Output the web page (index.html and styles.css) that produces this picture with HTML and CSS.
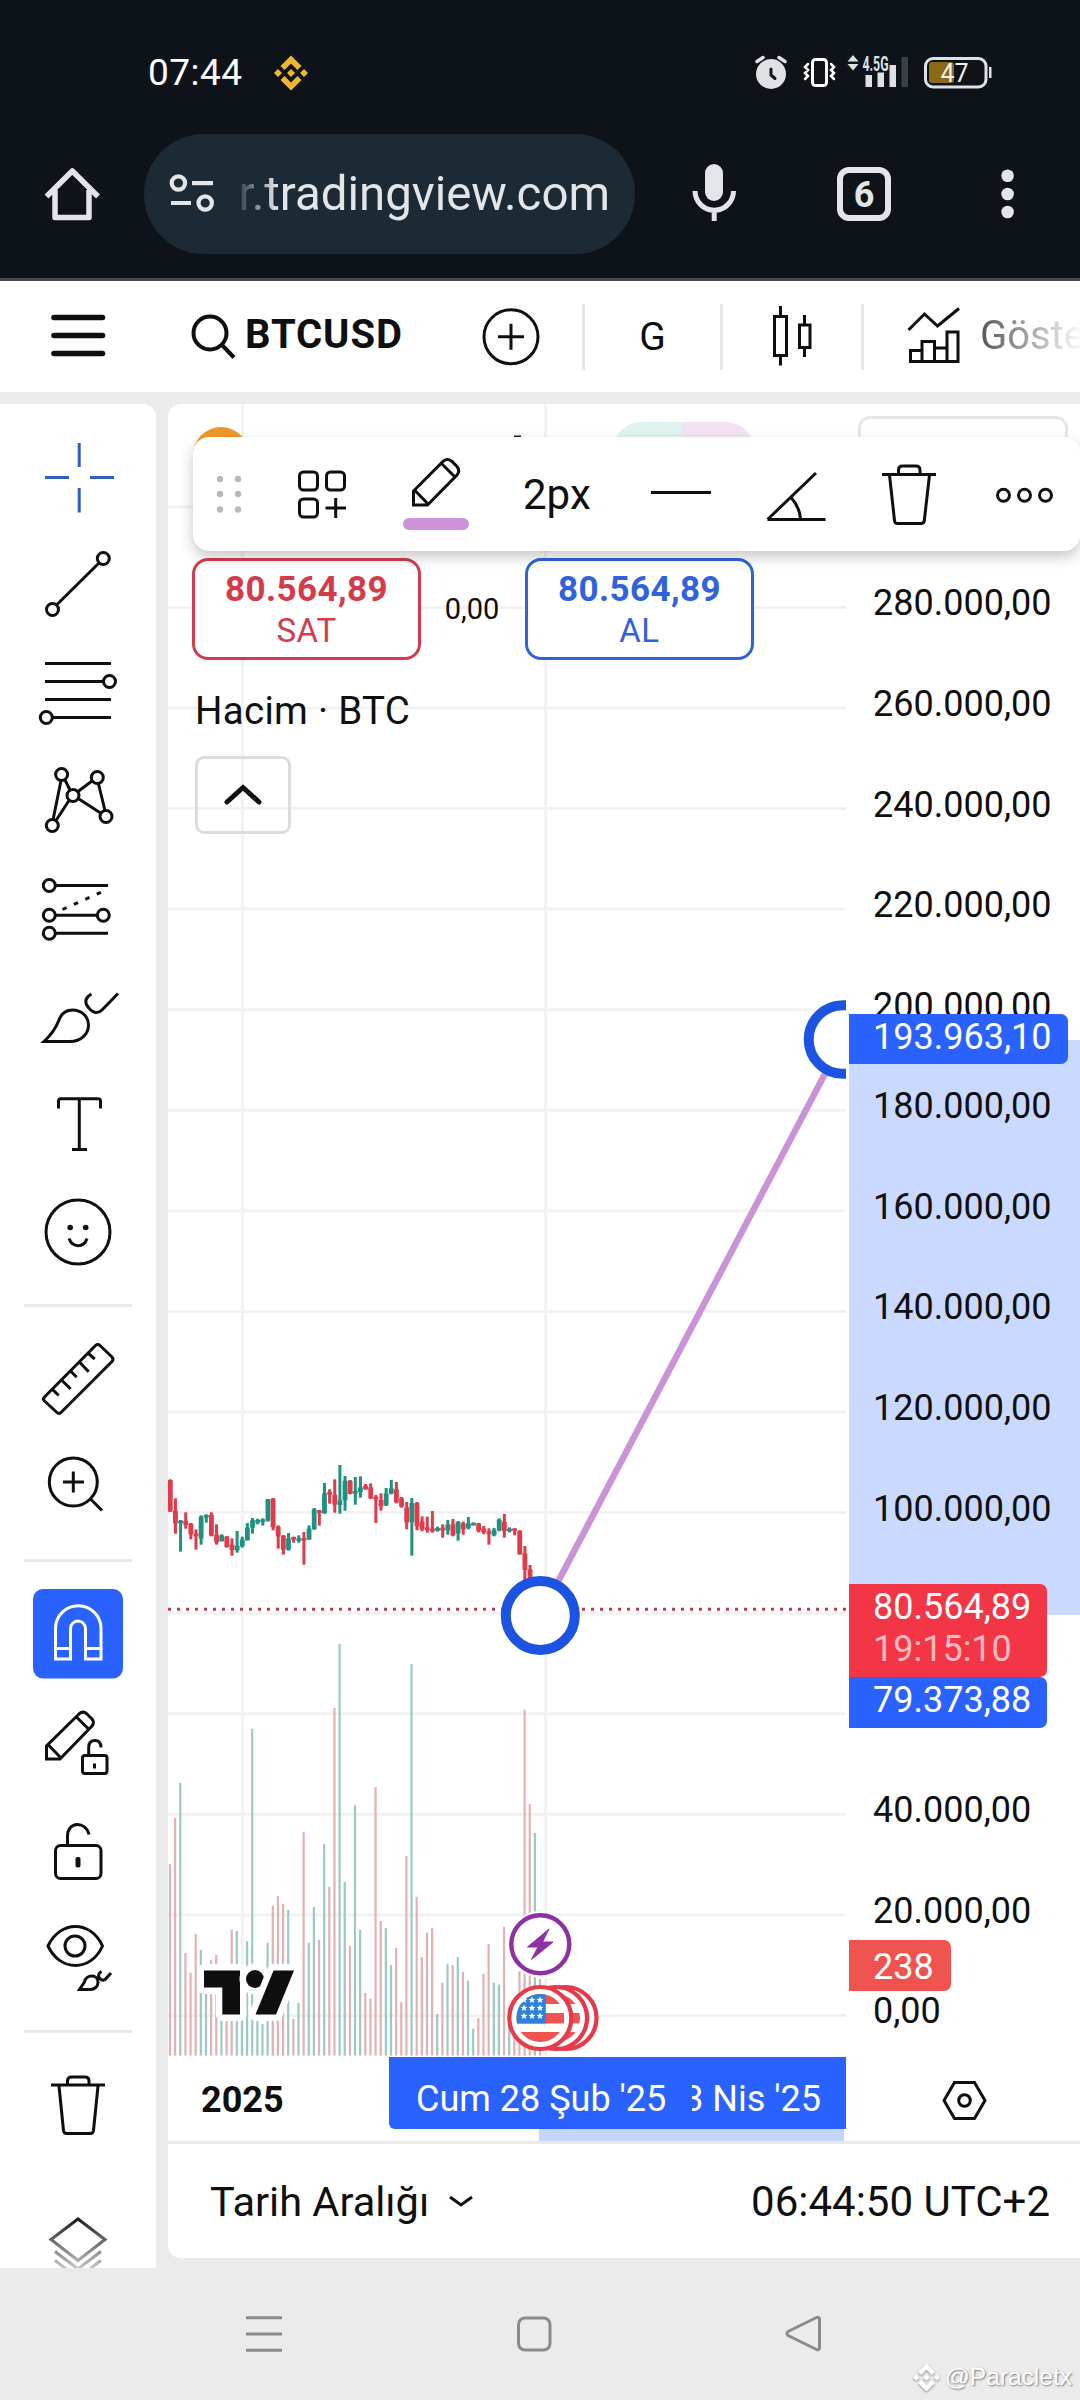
FILE: index.html
```html
<!DOCTYPE html>
<html lang="tr">
<head>
<meta charset="utf-8">
<title>BTCUSD</title>
<link rel="stylesheet" href="styles.css">
</head>
<body>
<header class="status">
  <span class="clock">07:44</span>
  <svg class="bnb" viewBox="-18 -18 36 36"><g fill="#f0b92b"><path d="M0-17.500L10.500-7L6.500-3L0-9.500L-6.500-3L-10.500-7zM0 17.500L10.500 7L6.500 3L0 9.500L-6.500 3L-10.500 7zM0-4L4 0L0 4L-4 0zM13-4L17 0L13 4L9 0zM-13-4L-9 0L-13 4L-17 0z"/></g></svg>
  <svg class="sysicons" viewBox="745 45 260 60">
    <g stroke="#dfe2e5" fill="none" stroke-width="3.500" stroke-linecap="round">
      <circle cx="771" cy="74" r="15" fill="#dfe2e5" stroke="none"/>
      <path d="M757 61.500L763 57.500M785 61.500L779 57.500"/>
      <path d="M771 69V75L775 78.500" stroke="#0e131a" stroke-width="3"/>
      <rect x="812.500" y="59.500" width="14" height="26" rx="3" stroke="#fff" stroke-width="3"/>
      <path d="M808 64l-3 3 3 3-3 3 3 3-3 3M831 64l3 3-3 3 3 3-3 3 3 3" stroke="#fff" stroke-width="2.500"/>
    </g>
    <g fill="#dfe2e5">
      <path d="M853 55L858.500 61.500H847.500zM853 70.500L858.500 64H847.500z"/>
      <rect x="865.500" y="75" width="6.500" height="12"/><rect x="877.500" y="72.500" width="6.500" height="14.500"/><rect x="889.500" y="65" width="6.500" height="22"/>
      <rect x="901.500" y="57" width="6.500" height="30" fill="#3a3f45"/>
      <text x="862.500" y="70.500" class="net" textLength="26" lengthAdjust="spacingAndGlyphs">4.5G</text>
      <rect x="929" y="62" width="25" height="21" rx="3" fill="#8a6a16"/>
      <rect x="989" y="67" width="2.500" height="11"/>
    </g>
    <rect x="925.500" y="58.500" width="60.500" height="28.500" rx="7.500" fill="none" stroke="#dfe2e5" stroke-width="3"/>
    <text x="940.500" y="81.500" class="batt">47</text>
  </svg>
</header>
<div class="browser">
  <svg class="home" viewBox="0 160 144 68"><path d="M46.500 196.500L72.300 171L98 196.500M55 190V217.500H89V190" fill="none" stroke="#e3e6e9" stroke-width="5.500" stroke-linejoin="round"/></svg>
  <div class="url">
    <svg viewBox="168 170 50 50"><g fill="none" stroke="#e3e6e9" stroke-width="4.200"><circle cx="178.400" cy="184" r="6.700"/><path d="M192 184.200H213M171 204H191"/><circle cx="205.200" cy="204" r="6.700"/></g></svg>
    <span>r.tradingview.com</span>
  </div>
  <svg class="actions" viewBox="635 160 445 68"><g fill="none" stroke="#e3e6e9" stroke-width="5">
    <rect x="705" y="164" width="18" height="37" rx="9" fill="#e3e6e9" stroke="none"/>
    <path d="M695 191A19 19 0 0 0 733.500 191M714.200 209V221"/>
    <rect x="840" y="170" width="48" height="48" rx="9" stroke-width="6"/></g>
    <text x="864" y="206.500" class="tabs">6</text>
    <g fill="#e3e6e9"><circle cx="1007.600" cy="175.700" r="6.300"/><circle cx="1007.600" cy="194" r="6.300"/><circle cx="1007.600" cy="212" r="6.300"/></g>
  </svg>
</div>
<nav class="topbar">
  <svg class="menu ic" viewBox="0 286.500 156 100"><path d="M54 317H102.500M54 335H102.500M54 353H102.500" stroke-width="5.600" stroke-linecap="round"/></svg>
  <div class="search"><svg class="ic" viewBox="188 309 48 54"><g stroke-width="4"><circle cx="210" cy="332" r="16.500"/><path d="M222 344L234 356.500"/></g></svg><b>BTCUSD</b></div>
  <svg class="plus ic" viewBox="466 286.500 116 100"><circle cx="511" cy="336.300" r="27"/><path d="M498 336.300H524M511 323.300V349.300"/></svg>
  <div class="cell interval">G</div>
  <div class="cell"><svg class="ic w100" viewBox="724 303 138 66"><rect x="775.500" y="315.500" width="12" height="39"/><rect x="800.500" y="324" width="10.500" height="22.500"/><path d="M781.500 305V315M781.500 355V364.500M805.500 314V324M805.500 347V356"/></svg></div>
  <div class="cell ind"><svg class="ic" viewBox="904.500 303 60 66"><path d="M909 329L925 313L938 325L959.500 307.500M911 361V349.500H922.500V361M922.500 349.500V340.500H935V361M935 347H947.500V361M947.500 347V331H958.500V361M909.500 360.500H960"/></svg><span>Göstergeler</span></div>
</nav>
<main class="work">
  <aside class="tools">
    <svg class="ic" viewBox="0 404 156 126"><path stroke="#2f5fc4" d="M79.200 443V467M79.200 488V512.500M45 477.500H69M90 477.500H114"/></svg>
    <svg class="ic" viewBox="0 530 156 110"><path d="M56.500 605L99 563"/><circle cx="103.300" cy="558.500" r="6"/><circle cx="52.500" cy="609.500" r="6"/></svg>
    <svg class="ic" viewBox="0 640 156 110"><path d="M45 663.500H111M45 681.500H103M45 699.500H111M53 717.500H111"/><circle cx="109.500" cy="681.500" r="6"/><circle cx="46.300" cy="717.500" r="6"/></svg>
    <svg class="ic" viewBox="0 750 156 105"><path d="M60.900 781L53.200 819M65 780L70 790M69 800.500L56 820.500M78 791.500L92 781M98.500 784L105 810.500M79 799L100.500 813"/><circle cx="61.600" cy="774.500" r="6"/><circle cx="97.300" cy="777.500" r="6"/><circle cx="73" cy="795.500" r="6"/><circle cx="106" cy="816.500" r="6"/><circle cx="52.300" cy="825.500" r="6"/></svg>
    <svg class="ic" viewBox="0 855 156 110"><path d="M56 885.500H108M56 915.300H97M56 933.300H108"/><path d="M62.500 909.500L104 891" stroke-dasharray="4.500 8"/><circle cx="49.300" cy="885.500" r="6"/><circle cx="49.300" cy="915.300" r="6"/><circle cx="103.300" cy="915.300" r="6"/><circle cx="49.300" cy="933.300" r="6"/></svg>
    <svg class="ic" viewBox="0 965 156 105"><path d="M44 1041.500H70C81 1041.500 88.500 1034 88.500 1025C88.500 1016 81 1010 72.500 1010C66 1010 61.500 1013 59 1020C56 1028 50 1036 44 1041.500z"/><path d="M91.500 994C85.500 997 84 1002 88 1007C93 1013.500 98 1014 102 1010L118 993.500"/></svg>
    <svg class="ic" viewBox="0 1070 156 110"><path d="M58.500 1108.500V1101Q58.500 1098.700 61 1098.700H98Q100.500 1098.700 100.500 1101V1108.500M79.300 1099V1149.500M72 1149.500H87"/></svg>
    <svg class="ic" viewBox="0 1180 156 124"><circle cx="78" cy="1232" r="32"/><circle cx="70.200" cy="1227.500" r="2.800" class="dot"/><circle cx="85.700" cy="1227.500" r="2.800" class="dot"/><path d="M69 1238.500C72.500 1248 84 1248 87 1238.500"/></svg>
    <hr>
    <svg class="ic" viewBox="0 1307 156 123"><path d="M44.500 1397L95.500 1345.500Q97.700 1343.500 100 1345.500L112 1357Q114 1359.300 112 1361.500L61 1412.500Q59 1414.500 57 1412.500L44.500 1401Q42.500 1399 44.500 1397zM51.700 1388.700L58.700 1395.500M61 1379.500L70.700 1389M70 1370.500L76.700 1377.300M79.300 1362L88.700 1371.700M87.700 1352.900L94.700 1359"/></svg>
    <svg class="ic" viewBox="0 1430 156 129"><circle cx="73.300" cy="1482" r="24"/><path d="M63 1482H84M73.300 1471.500V1492.500M90.500 1499L102 1510.500"/></svg>
    <hr>
    <svg class="ic" viewBox="0 1562 156 130"><rect x="33" y="1589" width="90" height="89.500" rx="10" class="active"/><path stroke="#fff" d="M55.500 1659V1628.500A22.700 22.700 0 0 1 101 1628.500V1659H85.500V1628.500A7.500 7.500 0 0 0 70.500 1628.500V1659zM55.500 1648.500H70.500M85.500 1648.500H101"/></svg>
    <svg class="ic" viewBox="0 1692 156 108"><path d="M46.500 1759V1746L79.500 1713.500Q83 1710.500 87 1714L92 1719Q95 1722.500 92 1726L60 1759zM48.500 1745L60.500 1757.500M76.500 1717L88.500 1729"/><rect x="82.500" y="1755.500" width="24.500" height="18" rx="2.500"/><path d="M88.700 1755V1747.500Q88.700 1740.500 95 1740.500Q101 1740.500 101 1747.500"/><rect class="dot" x="93" y="1763.500" width="3" height="5"/></svg>
    <svg class="ic" viewBox="0 1800 156 106"><rect x="55.500" y="1845.500" width="45.500" height="33" rx="5"/><path d="M67.500 1845V1836C67.500 1821 86 1821 89 1834.500"/><rect class="dot" x="75.500" y="1857" width="5" height="10.500" rx="2"/></svg>
    <svg class="ic" viewBox="0 1906 156 124"><path d="M48 1946C60 1920 91 1920 102.500 1946C91 1972 60 1972 48 1946z"/><circle cx="75" cy="1946" r="10"/><path d="M79.500 1989.500H90C95 1989.500 98 1986 98 1982.500C98 1974 86 1974 84.500 1982zM101.500 1971.500C97 1974 98.500 1978 101 1979.500C103 1981 105 1980 106.500 1978L111 1973"/></svg>
    <hr>
    <svg class="ic" viewBox="0 2033 156 137"><path d="M51 2085H105M67.500 2084V2081Q67.500 2077 71.500 2077H85Q89 2077 89 2081V2084M59 2086L63.500 2130.500Q64 2133.500 66.500 2133.500H90.500Q93 2133.500 93.500 2130.500L98 2086"/></svg>
    <svg class="ic" viewBox="0 2170 156 98"><defs><linearGradient id="fade" x1="0" y1="2215" x2="0" y2="2270" gradientUnits="userSpaceOnUse"><stop offset="0" stop-color="#111"/><stop offset="1" stop-color="#ccc"/></linearGradient></defs><path stroke="url(#fade)" d="M78 2219L105 2239.500L78 2260.500L51 2239.500zM55 2251.500L78 2269L101 2251.500M55 2260.500L78 2278L101 2260.500"/></svg>
  </aside>
  <section class="panel">
    <div class="chartrow">
      <div class="plot">
        <svg id="chart" viewBox="168 404 678 1652">
          <g class="grid" id="grid"></g>
          <g id="volume"></g>
          <g id="candles"></g>
          <path d="M168 1609.300H846" class="last"/>
          <path d="M540.300 1615.500L843 1039.500" class="trend"/>
          <circle cx="540.300" cy="1615.500" r="34.500" class="handle"/><circle cx="843" cy="1039.500" r="34.300" class="handle"/>
          <g class="tv"><path d="M204 1970.500H240V2014.500H222.300V1987.500H204z"/><circle cx="255" cy="1979" r="9"/><path d="M273.500 1970.500H294L276 2014.500H255.500z"/></g>
          <circle cx="540.300" cy="1944.300" r="33.500" fill="#fff"/>
          <circle cx="540.300" cy="1944.300" r="29" class="bolt"/><path d="M549 1929L527.500 1947H538L531.500 1959.500L553 1942H542.500z" fill="#8e2fa3" stroke="#8e2fa3" stroke-width="1" stroke-linejoin="round"/>
          <defs>
            <clipPath id="disc"><circle r="24"/></clipPath>
            <g id="flag"><circle r="31" fill="#fff" stroke="#e8394a" stroke-width="4.200"/><g clip-path="url(#disc)"><path fill="#ef5350" d="M-24-24H24V-14H-24zM-24-5H24V5.500H-24zM-24 14H24V24H-24z"/><path fill="#2f80d8" d="M-24-24H5.500V5.500H-24z"/></g></g>
          </defs>
          <use href="#flag" x="565.500" y="2018"/><use href="#flag" x="556" y="2018"/><use href="#flag" x="540.300" y="2018"/>
          <g id="stars" fill="#fff"></g>
          <circle cx="221" cy="455" r="28" fill="#ee972b"/>
          <rect x="514" y="435.500" width="7" height="8" fill="#222"/>
          <path d="M682 422H641A28 28 0 0 0 641 478H682z" fill="#dff2f0"/><path d="M682 422H726A28 28 0 0 1 726 478H682z" fill="#f3e2f4"/>
        </svg>
        <div class="legend">
          <div class="quotes">
            <div class="quote sell"><b>80.564,89</b><span>SAT</span></div>
            <span class="spread">0,00</span>
            <div class="quote buy"><b>80.564,89</b><span>AL</span></div>
          </div>
          <p class="vol">Hacim · BTC</p>
          <div class="collapse"><svg class="ic" viewBox="220 780 46 30"><path stroke-width="5" stroke-linecap="round" d="M227 802L243 787.500L259 802"/></svg></div>
        </div>
      </div>
      <div class="axis">
        <div class="band"></div>
        <div class="unit"></div>
        <ol>
          <li>280.000,00</li><li>260.000,00</li><li>240.000,00</li><li>220.000,00</li><li>200.000,00</li><li>180.000,00</li><li>160.000,00</li><li>140.000,00</li><li>120.000,00</li><li>100.000,00</li><li></li><li></li><li>40.000,00</li><li>20.000,00</li><li>0,00</li>
        </ol>
        <div class="tag target">193.963,10</div>
        <div class="tag price">80.564,89<span>19:15:10</span></div>
        <div class="tag origin">79.373,88</div>
        <div class="tag volume">238</div>
      </div>
    </div>
    <div class="timerow">
      <b>2025</b>
      <div class="range"></div>
      <div class="dates"><span>Cum 28 Şub '25</span><span class="end">3 Nis '25</span></div>
      <svg class="ic" viewBox="940 2078 48 44"><path d="M954.500 2082.500H974.500L985 2100.500L974.500 2118.500H954.500L944 2100.500z"/><circle cx="964.500" cy="2100.500" r="5.800"/></svg>
    </div>
    <div class="footer">
      <span class="rng">Tarih Aralığı</span><svg class="ic" viewBox="448 2190 28 20"><path d="M451 2196L462 2204L473 2196"/></svg>
      <span class="utc">06:44:50 UTC+2</span>
    </div>
  </section>
  <div class="floatbar">
    <svg class="ic" viewBox="193 437 320 114">
      <g class="grip"><circle cx="220" cy="479" r="3.200"/><circle cx="238" cy="479" r="3.200"/><circle cx="220" cy="494" r="3.200"/><circle cx="238" cy="494" r="3.200"/><circle cx="220" cy="509.500" r="3.200"/><circle cx="238" cy="509.500" r="3.200"/></g>
      <rect x="299.500" y="472" width="18" height="18" rx="4"/><rect x="326.500" y="472" width="18" height="18" rx="4"/><rect x="299.500" y="499" width="18" height="18" rx="4"/><path d="M325.500 508H346M335.700 498V518"/>
      <path d="M413.500 505V491L443.500 461Q447.500 458 451.500 461L457 466.500Q460.500 471 457 475L427.500 505zM415 490.500L428 504M441.500 463.500L455 477"/>
      <rect x="403" y="518" width="66" height="12" rx="6" fill="#cd93d8" stroke="none"/>
    </svg>
    <span>2px</span>
    <svg class="ic" viewBox="600 437 480 114">
      <path d="M651 492.500H711M767.500 519.500L816 473M767.500 519.500H825.500M791.500 498Q800 508 800.500 519M882 474.500H936M898.500 474V470Q898.500 466 902.500 466H916Q920 466 920 470V474M889.500 475L894.500 520.500Q894.700 523.500 897.500 523.500H921Q924 523.500 924.300 520.500L929.500 475"/>
      <circle cx="1003.500" cy="495.300" r="6"/><circle cx="1024.500" cy="495.300" r="6"/><circle cx="1045.500" cy="495.300" r="6"/>
    </svg>
  </div>
</main>
<footer class="sysnav">
  <svg viewBox="0 2268 1080 132"><g fill="none" stroke="#8b8b8b" stroke-width="3" stroke-linejoin="round"><path d="M246 2317.700H282M246 2334H282M246 2350.300H282"/><rect x="518.500" y="2318" width="31.500" height="32" rx="6.500"/><path d="M788 2331.500L816.500 2317.500Q819.500 2316.500 819.500 2319.500V2347.500Q819.500 2350.500 816.500 2349.500L788 2335.500Q786 2333.500 788 2331.500z"/></g></svg>
  <div class="mark"><svg viewBox="-18 -18 36 36"><path fill="#fff" d="M0-17.500L10.500-7L6.500-3L0-9.500L-6.500-3L-10.500-7zM0 17.500L10.500 7L6.500 3L0 9.500L-6.500 3L-10.500 7zM0-4L4 0L0 4L-4 0zM13-4L17 0L13 4L9 0zM-13-4L-9 0L-13 4L-17 0z"/></svg>@Paracletx</div>
</footer>
<script src="chart.js"></script>
</body>
</html>
```
FILE: styles.css
```css
* { box-sizing: border-box; }
body { margin: 0; width: 1080px; height: 2400px; overflow: hidden; background: #ebebeb; color: #0f0f0f; font-family: Roboto, "Liberation Sans", sans-serif; font-size: 36px; }
svg { display: block; flex: none; }
.ic { fill: none; stroke: #0f0f0f; stroke-width: 3; }
.dot { fill: #0f0f0f; stroke: none; }

.status { height: 118px; padding-left: 148px; background: #0e131a; display: flex; }
.clock { color: #fff; font-size: 37px; line-height: 42px; margin-top: 52px; width: 125px; letter-spacing: .5px; }
.bnb { width: 36px; height: 36px; margin-top: 55px; }
.sysicons { width: 260px; height: 60px; margin: 45px 0 0 436px; }
.net { font: 700 21px Roboto, sans-serif; }
.batt { font: 25px Roboto, sans-serif; fill: #f3f0ea; }

.browser { height: 163px; background: #0e131a; border-bottom: 3px solid #46494d; display: flex; align-items: center; padding-bottom: 8px; }
.home { width: 144px; height: 68px; }
.url { width: 491px; height: 120px; border-radius: 60px; background: #1b2a34; display: flex; align-items: center; padding: 0 0 0 24px; color: #e3e6e9; font-size: 47.4px; }
.url svg { width: 50px; height: 50px; }
.url span { width: 395px; flex: none; margin-left: -3px; text-align: right; white-space: nowrap; -webkit-mask-image: linear-gradient(90deg, transparent 18px, #000 62px); mask-image: linear-gradient(90deg, transparent 18px, #000 62px); }
.actions { width: 445px; height: 68px; }
.tabs { font: 700 36px Roboto, sans-serif; fill: #e3e6e9; text-anchor: middle; }

.topbar { height: 111px; background: #fff; display: grid; grid-template-columns: 156px 310px 116px 138px 141px 219px; align-items: center; }
.menu, .plus { width: 100%; height: 100px; }
.search { display: flex; align-items: center; padding-left: 32px; }
.search svg { width: 48px; height: 54px; }
.search b { font-size: 40px; font-weight: 700; letter-spacing: .9px; margin: 0 0 5px 9px; }
.cell { height: 66px; border-left: 3px solid #e6e6e6; overflow: hidden; display: flex; align-items: center; }
.w100 { width: 138px; height: 66px; }
.interval { justify-content: center; font-size: 39px; }
.ind { padding-left: 40px; }
.ind svg { width: 60px; height: 66px; }
.ind span { font-size: 40px; margin: 0 0 3px 16px; color: transparent; background: linear-gradient(90deg, #555, #fff 104px); -webkit-background-clip: text; background-clip: text; }

.work { height: 1876px; border-top: 12px solid #ebebeb; display: flex; gap: 12px; position: relative; }
.tools { width: 156px; height: 1864px; background: #fff; border-radius: 0 13px 0 0; overflow: hidden; }
.tools svg { width: 156px; }
.tools circle { fill: #fff; }
.tools .dot { fill: #0f0f0f; }
.tools .active { fill: #2962ff; stroke: none; }
.tools hr { width: 108px; height: 3px; margin: 0 24px; border: 0; background: #e9e9e9; }

.panel { width: 912px; height: 1854px; background: #fff; border-radius: 13px 0 0 13px; overflow: hidden; }
.chartrow { height: 1652px; display: flex; }
.plot { width: 678px; position: relative; }
#chart { width: 678px; height: 1652px; }
.grid { stroke: #f2f2f2; stroke-width: 3; }
.last { stroke: #c23d4b; stroke-width: 3; stroke-dasharray: 3 6; }
.trend { stroke: #ca93d8; stroke-width: 6.5; }
.handle { fill: #fff; stroke: #1d53e2; stroke-width: 10; }
.tv { fill: #0f0f0f; stroke: #fff; stroke-width: 13; paint-order: stroke; stroke-linejoin: round; }
.bolt { fill: #fff; stroke: #8e2fa3; stroke-width: 4.4; }
.legend { position: absolute; left: 24px; top: 154px; }
.quotes { display: flex; align-items: center; }
.quote { width: 229px; height: 102px; border: 3px solid; border-radius: 16px; background: #fff; display: flex; flex-direction: column; align-items: center; padding-top: 8px; }
.quote b { font-size: 35px; line-height: 42px; letter-spacing: .4px; }
.quote span { font-size: 33px; line-height: 40px; letter-spacing: .5px; }
.sell { color: #d63a4a; }
.buy { color: #2f62dc; }
.spread { width: 104px; padding-right: 2px; text-align: center; font-size: 29px; }
.vol { margin: 28px 0 0 3px; font-size: 38.5px; line-height: 46px; letter-spacing: .3px; }
.collapse { margin: 22px 0 0 3px; width: 96px; height: 78px; border: 3px solid #dcdcdc; border-radius: 9px; display: grid; place-items: center; }
.collapse svg { width: 46px; height: 30px; }

.axis { width: 234px; position: relative; }
.axis ol { list-style: none; margin: 0; padding: 149.400px 0 0 27px; position: relative; }
.axis li { height: 100.580px; line-height: 100.580px; }
.band { position: absolute; left: 3px; right: 0; top: 636px; height: 575px; background: #c9d9ff; }
.unit { position: absolute; left: 12px; top: 12px; width: 210px; height: 60px; border: 3px solid #e6e6e6; border-radius: 12px; }
.tag { position: absolute; left: 3px; padding-left: 24px; color: #fff; border-radius: 0 7px 7px 0; background: #2962ff; }
.target { top: 610px; width: 219px; height: 50px; line-height: 46px; }
.price { top: 1180px; width: 198px; height: 93px; line-height: 46px; background: #f23645; }
.price span { display: block; line-height: 38px; color: #ffb9c0; }
.origin { top: 1273px; width: 198px; height: 51px; line-height: 46px; }
.volume { top: 1536px; width: 102px; height: 51px; line-height: 54px; background: #ef5350; }

.timerow { height: 88px; border-bottom: 3px solid #e9e9e9; position: relative; display: flex; align-items: center; justify-content: space-between; padding: 0 92px 0 33px; }
.timerow b { margin-top: 3px; }
.timerow svg { width: 48px; height: 44px; margin-top: 3px; }
.range { position: absolute; left: 371px; top: 72px; width: 305px; height: 13px; background: #c5d5fc; }
.dates { position: absolute; left: 221px; top: 1px; width: 457px; height: 72px; padding: 0 25px 0 27px; background: #2962ff; border-radius: 0 0 0 6px; color: #fff; line-height: 84px; display: flex; justify-content: space-between; white-space: nowrap; }
.end { width: 129px; overflow: hidden; display: flex; justify-content: flex-end; }
.footer { height: 114px; display: flex; align-items: center; padding: 0 30px 0 42px; font-size: 41.5px; }
.footer svg { width: 28px; height: 20px; margin-left: 18px; }
.utc { margin-left: auto; font-size: 42px; }

.floatbar { position: absolute; left: 193px; top: 33px; width: 887px; height: 114px; background: #fff; border-radius: 16px; box-shadow: 0 6px 14px rgba(0,0,0,.22); display: flex; align-items: center; }
.floatbar svg { height: 114px; }
.floatbar .grip { fill: #b8b8b8; stroke: none; }
.floatbar svg:first-child { width: 320px; }
.floatbar svg:last-child { width: 480px; }
.floatbar span { width: 87px; padding-left: 10px; font-size: 42px; }

.sysnav { height: 132px; position: relative; }
.sysnav > svg { width: 1080px; height: 132px; }
.mark { position: absolute; right: 8px; bottom: 8px; display: flex; align-items: center; color: #fff; font: 24.5px/30px "Liberation Sans", sans-serif; text-shadow: 1px 1px 2px #777; }
.mark svg { width: 29px; height: 29px; margin-right: 4px; filter: drop-shadow(0 1px 1px #888); }
```
FILE: chart.js
```js
const NS = "http://www.w3.org/2000/svg";
function add(parent, name, attrs) {
  const el = document.createElementNS(NS, name);
  for (const k in attrs) el.setAttribute(k, attrs[k]);
  document.getElementById(parent).appendChild(el);
}
const barX = i => 170 + 5.139 * i;

// grid: one line per 20.000, plus the two month lines
for (let k = 0; k <= 15; k++) add("grid", "path", { d: `M168 ${2015.5 - 100.58 * k}H846` });
for (const x of [242.3, 545.7]) add("grid", "path", { d: `M${x} 404V2056` });

// volume per day, r = down day, g = up day
const volume = "455r 565r 648g 244r 197r 289r 251g 165g 227r 239r 85g 85r 299r 296g 135g 272g 776g 85g 75g 268g 356r 379r 360r 346g 87r 125g 531r 268g 353g 275r 503g 401r 826r 978g 413g 261r 595g 299g 149r 135r 638r 320r 303g 215g 256r 127r 474r 930g 377r 234r 292r 303r 99g 173r 218g 215r 234g 199r 178g 64g 89r 194r 265r 173g 169g 306r 115g 130r 200r 822r 598r 529g 182r".split(" ");
volume.forEach((v, i) => {
  const h = parseInt(v) * 0.4209;
  add("volume", "rect", { x: barX(i) - 1.1, y: 2055.6 - h, width: 2.2, height: h, fill: v.endsWith("g") ? "#9cc9c3" : "#e3b1b1" });
});

// [high, low, body top, body bottom] in thirds of a pixel below the top of the price area
const candles = [
  [178,275,180,275],[235,341,272,310],[300,395,302,306],[277,326,302,316],[309,358,311,343],[328,389,341,348],[286,374,290,356],[283,308,285,292],[277,349,284,347],[313,374,344,367],
  [343,364,346,364],[348,383,350,381],[355,407,374,390],[333,398,377,391],[350,383,359,379],[309,361,323,361],[294,341,301,323],[296,313,300,306],[295,317,298,304],[237,305,238,302],
  [234,331,236,322],[316,386,320,349],[345,404,347,389],[339,392,355,389],[350,368,351,358],[346,368,355,360],[336,434,354,359],[316,359,326,359],[264,329,268,328],[270,317,271,276],
  [189,281,220,280],[208,251,216,224],[178,278,224,254],[135,281,241,255],[168,272,182,241],[180,223,182,222],[171,254,213,219],[169,233,202,216],[192,209,197,208],[190,237,202,235],
  [225,309,230,238],[220,272,240,259],[204,258,220,256],[180,223,205,221],[186,250,208,247],[231,263,235,260],[246,328,262,307],[234,407,249,307],[246,331,249,319],[289,334,305,328],
  [290,338,322,330],[273,338,326,334],[320,335,324,331],[313,353,323,331],[300,344,314,331],[297,349,313,346],[303,362,306,340],[305,344,310,328],[291,328,310,325],[307,314,309,312],
  [309,337,310,332],[318,343,326,337],[325,374,334,341],[324,349,330,346],[295,334,299,331],[282,353,305,334],[322,337,326,331],[325,346,325,331],[331,404,332,403],[378,480,400,450],[435,475,448,475]
];
const ups = new Set([2,6,7,10,13,14,15,16,17,18,19,23,25,27,28,30,33,34,36,37,42,43,47,52,54,56,58,59,63,64,66]);
candles.forEach(([hi, lo, t, b], i) => {
  const fill = ups.has(i) ? "#1f917f" : "#e03a4b", x = barX(i) + .3, y = v => 1420 + v / 3;
  add("candles", "rect", { x: x - 1.5, y: y(hi), width: 3, height: (lo - hi) / 3, fill });
  add("candles", "rect", { x: x - 2.4, y: y(t), width: 4.8, height: Math.max(2.6, (b - t) / 3), fill });
});

// stars of the flag badge
for (let r = 0; r < 3; r++) for (let c = 0; c < 3; c++) {
  const cx = 524 + c * 8, cy = 2000 + r * 8; let d = "";
  for (let p = 0; p < 10; p++) {
    const a = Math.PI * (p / 5 - .5), q = p % 2 ? 1.6 : 3.6;
    d += (p ? "L" : "M") + (cx + q * Math.cos(a)).toFixed(2) + " " + (cy + q * Math.sin(a)).toFixed(2);
  }
  add("stars", "path", { d: d + "z" });
}
```
